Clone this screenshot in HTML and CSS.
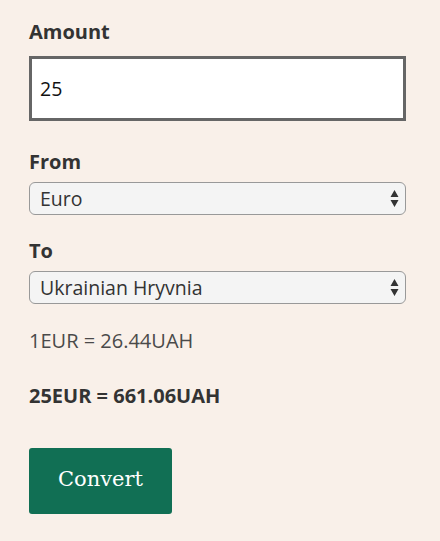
FILE: index.html
```html
<!DOCTYPE html>
<html lang="en">

<head>
    <meta charset="UTF-8">
    <meta name="viewport" content="width=device-width, initial-scale=1.0">
    <title>Currency Converter</title>
    <link rel="stylesheet" href="styles.css">
</head>

<body>
    <div class="converter">
        <label class="field-label" for="amount">Amount</label>
        <input class="amount-input" type="text" id="amount" value="25">

        <label class="field-label" for="from">From</label>
        <div class="select-wrap">
            <select class="currency-select" id="from">
                <option>Euro</option>
            </select>
            <svg class="arrows" width="9" height="17" viewBox="0 0 9 17">
                <path d="M4.5 0 L8.5 7 L0.5 7 Z M0.5 10 L8.5 10 L4.5 17 Z" fill="#333" />
            </svg>
        </div>

        <label class="field-label" for="to">To</label>
        <div class="select-wrap">
            <select class="currency-select" id="to">
                <option>Ukrainian Hryvnia</option>
            </select>
            <svg class="arrows" width="9" height="17" viewBox="0 0 9 17">
                <path d="M4.5 0 L8.5 7 L0.5 7 Z M0.5 10 L8.5 10 L4.5 17 Z" fill="#333" />
            </svg>
        </div>

        <p class="rate">1EUR = 26.44UAH</p>
        <p class="result">25EUR = 661.06UAH</p>

        <button class="convert-btn">Convert</button>
    </div>
</body>

</html>
```

FILE: styles.css
```css
body {
    margin: 0;
    background-color: #f9f0e9;
    font-family: 'Open Sans', sans-serif;
    color: #333;
}

.converter {
    display: flex;
    flex-direction: column;
    align-items: flex-start;
    padding: 19px 34px 0 29px;
}

.field-label {
    font-size: 20px;
    font-weight: 700;
    color: #333;
    line-height: 26px;
    margin-bottom: 7px;
}

.amount-input {
    box-sizing: border-box;
    width: 100%;
    height: 65px;
    border: 3px solid #666;
    background-color: #fff;
    font-family: 'Open Sans', sans-serif;
    font-size: 19.5px;
    color: #111;
    padding: 0 8px;
    margin: 4px 0 28px;
    outline: none;
}

.select-wrap {
    position: relative;
    width: 100%;
    margin-bottom: 23px;
}

.currency-select {
    appearance: none;
    -webkit-appearance: none;
    box-sizing: border-box;
    width: 100%;
    height: 33px;
    border: 1px solid #999;
    border-radius: 6px;
    background-color: #f4f4f4;
    font-family: 'Open Sans', sans-serif;
    font-size: 19.5px;
    color: #333;
    padding: 0 10px;
    display: block;
}

.arrows {
    position: absolute;
    right: 7px;
    top: 8px;
    pointer-events: none;
}

.rate {
    font-size: 20px;
    line-height: 25px;
    margin: 1px 0 0;
    color: #4a4a4a;
}

.result {
    font-size: 20px;
    font-weight: 700;
    line-height: 27px;
    margin: 29px 0 0;
}

.convert-btn {
    margin-top: 39px;
    width: 143px;
    height: 66px;
    border: none;
    border-radius: 3px;
    background-color: #116f54;
    color: #fff;
    font-family: 'DejaVu Serif', serif;
    font-size: 21px;
    padding: 0 0 4px;
    cursor: pointer;
}
```
